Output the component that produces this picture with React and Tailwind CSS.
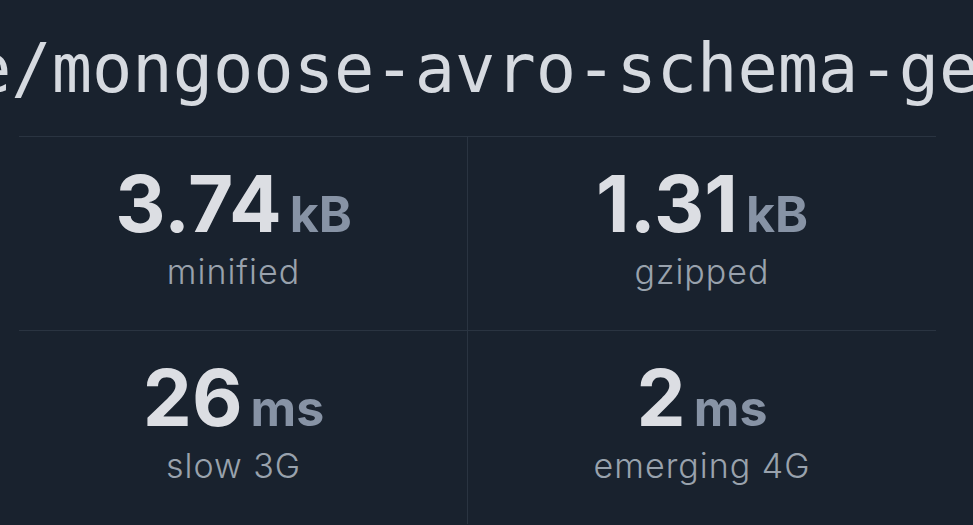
export default function App() {
  const stats = [
    [
      { value: "3.74", unit: "kB", label: "minified" },
      { value: "1.31", unit: "kB", label: "gzipped" },
    ],
    [
      { value: "26", unit: "ms", label: "slow 3G" },
      { value: "2", unit: "ms", label: "emerging 4G" },
    ],
  ];

  return (
    <div className="h-[525px] w-[973px] overflow-hidden bg-[#19222e]">
      <div className="overflow-hidden whitespace-nowrap pt-[36px] pb-[33px]">
        <h1 className="ml-[-29px] text-[67px] leading-none font-normal text-[#d6dae0] font-['DejaVu_Sans_Mono',monospace]">
          e/mongoose-avro-schema-generator
        </h1>
      </div>
      <div className="w-[936px] font-['Inter',sans-serif]">
        {stats.map((row, i) => (
          <div key={i}>
            <div className="ml-[19px] h-px bg-[#2a3441]" />
            <div className="grid grid-cols-2">
              {row.map((s, j) => (
                <div
                  key={s.label}
                  className={
                    "flex h-[193px] flex-col items-center pt-[28px] " +
                    (j === 0 ? "border-r border-[#2a3441]" : "")
                  }
                >
                  <div className="flex items-baseline gap-[8px] leading-none">
                    <span className="text-[78px] font-bold text-[#dcdee3]">
                      {s.value}
                    </span>
                    <span className="text-[50px] font-bold text-[#8793a5]">{s.unit}</span>
                  </div>
                  <div className="mt-[12px] text-[34px] leading-none font-light tracking-[1px] text-[#99a2ad]">
                    {s.label}
                  </div>
                </div>
              ))}
            </div>
          </div>
        ))}
      </div>
    </div>
  );
}
